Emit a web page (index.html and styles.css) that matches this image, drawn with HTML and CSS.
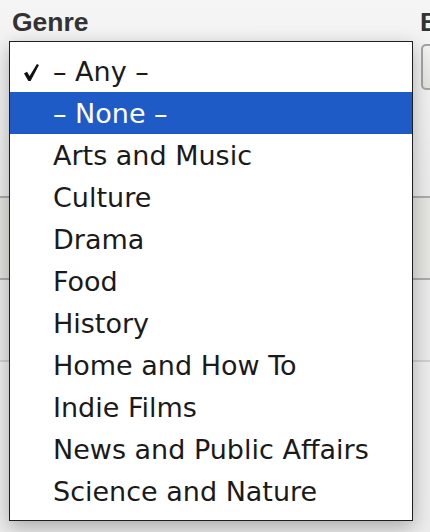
FILE: index.html
```html
<!DOCTYPE html>
<html>
<head>
<meta charset="utf-8">
<link rel="stylesheet" href="styles.css">
</head>
<body>
<div class="page">
  <div class="filters">
    <div class="field field-genre">
      <div class="label">Genre</div>
      <div class="select-box"></div>
    </div>
    <div class="field">
      <div class="label">Broadcast</div>
      <div class="select-box select-btn"></div>
    </div>
  </div>
  <div class="rows">
    <div class="row row-dark"></div>
    <div class="row"></div>
    <div class="row row-light"></div>
  </div>
  <ul class="menu">
    <li class="opt checked"><svg class="check" width="15" height="17" viewBox="0 0 15 17"><path d="M0 9.6 L3 7.8 L5.6 12 L12.9 0 L15 1 L6.6 17 L4.4 17 Z" fill="#111"/></svg>– Any –</li>
    <li class="opt selected">– None –</li>
    <li class="opt">Arts and Music</li>
    <li class="opt">Culture</li>
    <li class="opt">Drama</li>
    <li class="opt">Food</li>
    <li class="opt">History</li>
    <li class="opt">Home and How To</li>
    <li class="opt">Indie Films</li>
    <li class="opt">News and Public Affairs</li>
    <li class="opt">Science and Nature</li>
  </ul>
</div>
</body>
</html>
```
FILE: styles.css
```css
html, body {
  margin: 0;
  padding: 0;
}
body {
  background: #ececec;
  width: 430px;
  height: 532px;
  overflow: hidden;
}
.page {
  position: relative;
  width: 430px;
  height: 532px;
  background: linear-gradient(#f5f5f5, #ebebeb 180px, #ececec);
  overflow: hidden;
}
.filters {
  display: flex;
  padding-left: 12px;
  height: 196px;
}
.field {
  flex: none;
  width: 408px;
}
.field + .field {
  width: 300px;
}
.label {
  font-family: "Liberation Sans", Arial, sans-serif;
  font-weight: bold;
  font-size: 26.5px;
  color: #333;
  line-height: 32px;
  padding-top: 6px;
  height: 32px;
  white-space: nowrap;
}
.select-box {
  margin-top: 6px;
  height: 46px;
}
.select-btn {
  margin-left: 1px;
  border: 2px solid #a4a4a4;
  border-radius: 5px;
  background: linear-gradient(#f2f2f0, #e2e2de);
  box-sizing: border-box;
}
.rows {
  display: flex;
  flex-direction: column;
}
.row {
  height: 80px;
  border-top: 2px solid #ababab;
  background: #e9e9e9;
}
.row-dark {
  background: linear-gradient(90deg, #e2e2de, #e4e4e0);
}
.row-light {
  border-top-color: #cfcfcf;
  background: #ececec;
}
.menu {
  position: absolute;
  left: 9px;
  top: 41px;
  width: 402px;
  margin: 0;
  padding: 8px 0;
  list-style: none;
  background: #fff;
  border: 1px solid #1e1e1e;
  box-shadow: 0 6px 18px rgba(0, 0, 0, 0.28);
}
.opt {
  position: relative;
  height: 42px;
  line-height: 42px;
  padding-left: 43px;
  padding-top: 1px;
  box-sizing: border-box;
  font-family: "DejaVu Sans", "Lucida Grande", sans-serif;
  font-size: 27px;
  color: #1a1a1a;
  white-space: nowrap;
}
.opt.selected {
  background: #1f5bc6;
  color: #fff;
}
.check {
  position: absolute;
  left: 14px;
  top: 14px;
}
```
